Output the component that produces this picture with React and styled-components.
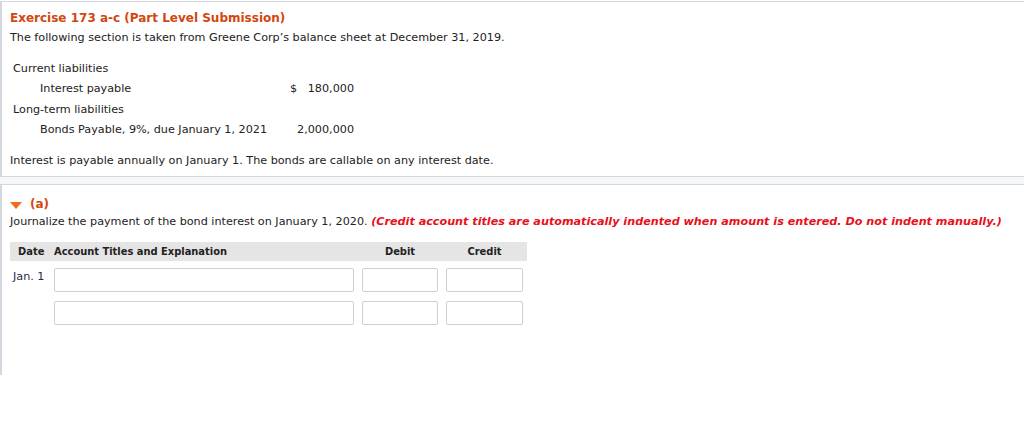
import React from "react";
import styled, { createGlobalStyle } from "styled-components";

const GlobalStyle = createGlobalStyle`
  html, body {
    margin: 0;
    padding: 0;
    background: #fff;
  }
  body {
    font-family: "DejaVu Sans", Verdana, sans-serif;
    font-size: 11.2px;
    color: #222;
  }
`;

const balanceRows = [
  { label: "Current liabilities", level: 0 },
  { label: "Interest payable", level: 1, dollar: true, amount: "180,000" },
  { label: "Long-term liabilities", level: 0 },
  { label: "Bonds Payable, 9%, due January 1, 2021", level: 1, amount: "2,000,000" },
];

const journalRows = [{ date: "Jan. 1" }, { date: "" }];

function App() {
  return (
    <>
      <GlobalStyle />
      <Page>
        <Panel>
          <Title>Exercise 173 a-c (Part Level Submission)</Title>
          <Text>The following section is taken from Greene Corp’s balance sheet at December 31, 2019.</Text>

          <Sheet>
            {balanceRows.map((row) => (
              <SheetRow key={row.label}>
                <SheetLabel $level={row.level}>{row.label}</SheetLabel>
                <Amount>
                  {row.dollar && <span>$</span>}
                  {row.amount && <span>{row.amount}</span>}
                </Amount>
              </SheetRow>
            ))}
          </Sheet>

          <Text>Interest is payable annually on January 1. The bonds are callable on any interest date.</Text>
        </Panel>

        <Band />

        <PartPanel>
          <PartHeading>
            <Caret />
            <span>(a)</span>
          </PartHeading>
          <Text>
            Journalize the payment of the bond interest on January 1, 2020.{" "}
            <Warning>(Credit account titles are automatically indented when amount is entered. Do not indent manually.)</Warning>
          </Text>

          <Journal>
            <HeadRow>
              <HeadCell $pad={8}>Date</HeadCell>
              <HeadCell $pad={0}>Account Titles and Explanation</HeadCell>
              <HeadCell $center>Debit</HeadCell>
              <HeadCell $center>Credit</HeadCell>
            </HeadRow>
            {journalRows.map((row, i) => (
              <EntryRow key={i}>
                <DateCell>{row.date}</DateCell>
                <Field />
                <Field />
                <Field />
              </EntryRow>
            ))}
          </Journal>
        </PartPanel>
      </Page>
    </>
  );
}

const Page = styled.div`
  width: 1024px;
  padding-top: 1px;
`;

const Panel = styled.section`
  border-top: 1px solid #d3d8de;
  border-left: 2px solid #d3d8de;
  border-bottom: 1px solid #d3d8de;
  padding: 8px 0 7px 8px;
`;

const Title = styled.div`
  color: #d2470f;
  font-weight: bold;
  font-size: 12px;
  line-height: 16px;
  margin-bottom: 4px;
`;

const Text = styled.div`
  line-height: 16px;
  white-space: nowrap;
`;

const Sheet = styled.div`
  padding: 12px 0 13px 3px;
  display: flex;
  flex-direction: column;
`;

const SheetRow = styled.div`
  display: grid;
  grid-template-columns: 277px 64px;
  height: 20.5px;
  align-items: center;
`;

const SheetLabel = styled.div`
  padding-left: ${(p) => p.$level * 27}px;
`;

const Amount = styled.div`
  display: flex;
  justify-content: space-between;
  & > span:only-child {
    margin-left: auto;
  }
`;

const Band = styled.div`
  height: 7px;
  background: #f5f7f9;
`;

const PartPanel = styled.section`
  box-sizing: border-box;
  border-top: 1px solid #d3d8de;
  border-left: 2px solid #d3d8de;
  height: 191px;
  padding: 11px 0 0 8px;
`;

const PartHeading = styled.div`
  display: flex;
  align-items: center;
  gap: 8px;
  color: #d2470f;
  font-weight: bold;
  font-size: 12px;
  line-height: 16px;
  margin-bottom: 2px;
`;

const Caret = styled.span`
  width: 0;
  height: 0;
  border-left: 6px solid transparent;
  border-right: 6px solid transparent;
  border-top: 7px solid #f26a1b;
  margin-top: 2px;
`;

const Warning = styled.span`
  color: #e8101a;
  font-weight: bold;
  font-style: italic;
`;

const Journal = styled.div`
  margin-top: 12px;
  width: 517px;
  display: flex;
  flex-direction: column;
  gap: 7px;
`;

const Columns = styled.div`
  display: grid;
  grid-template-columns: 36px 300px 76px 77px;
  column-gap: 8px;
  padding-right: 4px;
`;

const HeadRow = styled(Columns)`
  background: #e5e5e5;
  height: 19px;
  align-items: center;
  font-family: "DejaVu Sans Condensed", "DejaVu Sans", sans-serif;
  font-size: 11px;
  font-weight: bold;
  color: #222;
`;

const HeadCell = styled.div`
  padding-left: ${(p) => (p.$pad != null ? p.$pad : 0)}px;
  text-align: ${(p) => (p.$center ? "center" : "left")};
  white-space: nowrap;
`;

const EntryRow = styled(Columns)`
  height: 24px;
  margin-bottom: 2px;
`;

const DateCell = styled.div`
  color: #2b2b4d;
  padding: 1px 0 0 3px;
  line-height: 16px;
  white-space: nowrap;
`;

const Field = styled.div`
  border: 1px solid #cfcfcf;
  border-radius: 2px;
  background: #fff;
`;

export default App;
